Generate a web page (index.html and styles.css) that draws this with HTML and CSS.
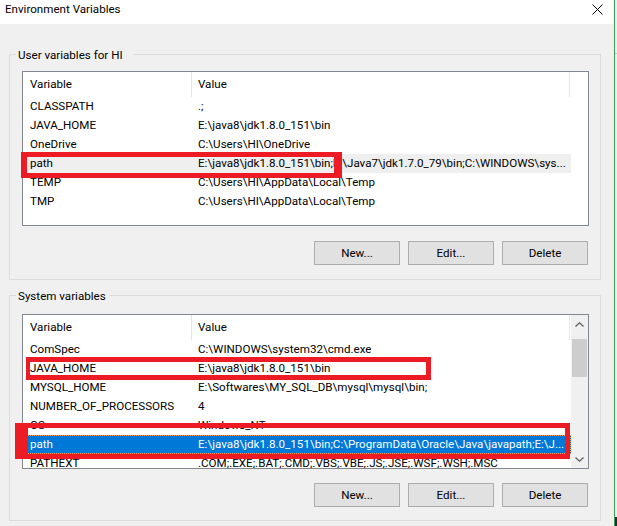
FILE: index.html
```html
<!DOCTYPE html>
<html>
<head>
<meta charset="utf-8">
<link rel="stylesheet" href="styles.css">
</head>
<body>
<div class="screen">
  <div class="window">
    <div class="titlebar">
      <span class="title">Environment Variables</span>
      <svg class="close" width="11" height="11" viewBox="0 0 11 11"><path d="M0.5 0.5 L10.5 10.5 M10.5 0.5 L0.5 10.5" stroke="#000" stroke-width="1" fill="none"/></svg>
    </div>
    <div class="content">
      <div class="group group-user">
        <div class="legend legend-user">User variables for HI</div>
        <div class="listbox listbox-user">
          <div class="list-main">
            <div class="header">
              <div class="hcell c1">Variable</div>
              <div class="hcell c2">Value</div>
            </div>
            <div class="row"><span class="c1">CLASSPATH</span><span class="c2">.;</span></div>
            <div class="row"><span class="c1">JAVA_HOME</span><span class="c2">E:\java8\jdk1.8.0_151\bin</span></div>
            <div class="row"><span class="c1">OneDrive</span><span class="c2">C:\Users\HI\OneDrive</span></div>
            <div class="row row-inactive"><span class="c1">path</span><span class="c2">E:\java8\jdk1.8.0_151\bin;E:\Java7\jdk1.7.0_79\bin;C:\WINDOWS\sys...</span></div>
            <div class="row"><span class="c1">TEMP</span><span class="c2">C:\Users\HI\AppData\Local\Temp</span></div>
            <div class="row"><span class="c1">TMP</span><span class="c2">C:\Users\HI\AppData\Local\Temp</span></div>
          </div>
          <div class="vscroll-blank"></div>
          <div class="mark mark-user-path"></div>
        </div>
        <div class="buttons">
          <div class="btn">New...</div>
          <div class="btn">Edit...</div>
          <div class="btn">Delete</div>
        </div>
      </div>

      <div class="group group-system">
        <div class="legend legend-system">System variables</div>
        <div class="listbox listbox-system">
          <div class="list-main">
            <div class="header">
              <div class="hcell c1">Variable</div>
              <div class="hcell c2">Value</div>
            </div>
            <div class="row"><span class="c1">ComSpec</span><span class="c2">C:\WINDOWS\system32\cmd.exe</span></div>
            <div class="row"><span class="c1">JAVA_HOME</span><span class="c2">E:\java8\jdk1.8.0_151\bin</span></div>
            <div class="row"><span class="c1">MYSQL_HOME</span><span class="c2">E:\Softwares\MY_SQL_DB\mysql\mysql\bin;</span></div>
            <div class="row"><span class="c1">NUMBER_OF_PROCESSORS</span><span class="c2">4</span></div>
            <div class="row"><span class="c1">OS</span><span class="c2">Windows_NT</span></div>
            <div class="row row-selected"><span class="c1">path</span><span class="c2">E:\java8\jdk1.8.0_151\bin;C:\ProgramData\Oracle\Java\javapath;E:\J...</span></div>
            <div class="row"><span class="c1">PATHEXT</span><span class="c2">.COM;.EXE;.BAT;.CMD;.VBS;.VBE;.JS;.JSE;.WSF;.WSH;.MSC</span></div>
          </div>
          <div class="vscroll">
            <svg class="arrow" width="9" height="5" viewBox="0 0 9 5"><path d="M0.5 4.5 L4.5 0.8 L8.5 4.5" stroke="#606060" stroke-width="1.3" fill="none"/></svg>
            <div class="thumb"></div>
            <div class="track-space"></div>
            <svg class="arrow" width="9" height="5" viewBox="0 0 9 5"><path d="M0.5 0.5 L4.5 4.2 L8.5 0.5" stroke="#606060" stroke-width="1.3" fill="none"/></svg>
          </div>
          <div class="mark mark-sys-java"></div>
          <div class="mark mark-sys-path"></div>
        </div>
        <div class="buttons buttons-system">
          <div class="btn">New...</div>
          <div class="btn">Edit...</div>
          <div class="btn">Delete</div>
        </div>
      </div>
    </div>
  </div>
  <div class="edge"></div>
</div>
</body>
</html>
```

FILE: styles.css
```css
html, body {
  margin: 0;
  padding: 0;
}

body {
  width: 617px;
  height: 526px;
  overflow: hidden;
  background: #f0f0f0;
  font-family: Roboto, "Liberation Sans", sans-serif;
  font-size: 11.6px;
  color: #000;
}

.screen {
  display: flex;
  width: 617px;
  height: 526px;
}

.window {
  width: 614px;
  height: 526px;
  display: flex;
  flex-direction: column;
  background: #f0f0f0;
}

.edge {
  width: 2px;
  height: 526px;
  border-left: 1px solid #3f9a5e;
  background:
    linear-gradient(#c8c8c8, #c8c8c8) 0 53px / 100% 1px no-repeat,
    linear-gradient(#2a2a2a, #2a2a2a) 0 517px / 100% 9px no-repeat,
    #f0f0f0;
}

.titlebar {
  height: 24px;
  background: #fff;
  display: flex;
  align-items: flex-start;
}

.title {
  padding-left: 5px;
  line-height: 18px;
}

.close {
  margin-left: auto;
  margin-right: 11px;
  margin-top: 4px;
}

.content {
  padding-top: 30px;
  padding-left: 9px;
}

.group {
  width: 592px;
  box-sizing: border-box;
  border: 1px solid #dcdcdc;
  padding: 0 11px 14px 12px;
}

.group-system {
  margin-top: 15px;
  padding-bottom: 13px;
}

.legend {
  margin-top: -8px;
  margin-left: -6px;
  height: 16px;
  line-height: 16px;
  background: #f0f0f0;
  width: fit-content;
  padding: 0 3px 0 2px;
}

.legend-user {
  padding-right: 11px;
}

.listbox {
  position: relative;
  display: flex;
  width: 567px;
  height: 155px;
  box-sizing: border-box;
  border: 1px solid #828790;
  background: #fff;
}

.listbox-user {
  margin-top: 8px;
}

.listbox-system {
  margin-top: 10px;
}

.list-main {
  width: 548px;
  overflow: hidden;
}

.header {
  display: flex;
  height: 25px;
}

.hcell {
  line-height: 25px;
  box-sizing: border-box;
  border-right: 1px solid #e5e5e5;
  white-space: nowrap;
}

.hcell.c1 {
  width: 169px;
  padding-left: 7px;
}

.hcell.c2 {
  width: 378px;
  padding-left: 6px;
}

.row {
  display: flex;
  height: 19px;
  line-height: 19px;
  white-space: nowrap;
  box-sizing: border-box;
}

.row .c1 {
  width: 169px;
  flex: none;
  padding-left: 7px;
  box-sizing: border-box;
}

.row .c2 {
  padding-left: 6px;
  overflow: hidden;
}

.row-inactive {
  background: #efefef;
}

.row-selected {
  background: #0078d7;
  color: #fff;
  border: 1px dotted #f0a060;
  line-height: 17px;
}

.row-selected .c1 {
  padding-left: 6px;
}

.row-selected .c2 {
  padding-left: 5px;
}

.vscroll-blank {
  width: 17px;
}

.vscroll {
  width: 17px;
  background: #f0f0f0;
  display: flex;
  flex-direction: column;
  align-items: center;
}

.vscroll .arrow {
  flex: none;
  margin: 7px 0 0;
}

.vscroll .arrow:last-child {
  margin: 0 0 6px;
}

.thumb {
  width: 15px;
  height: 38px;
  margin-top: 12px;
  background: #cdcdcd;
  flex: none;
}

.track-space {
  flex: 1;
}

.buttons {
  display: flex;
  justify-content: flex-end;
  gap: 8px;
  margin-top: 15px;
  margin-right: 1px;
}

.buttons-system {
  margin-top: 14px;
}

.btn {
  width: 86px;
  height: 24px;
  box-sizing: border-box;
  border: 1px solid #adadad;
  background: #e1e1e1;
  text-align: center;
  line-height: 22px;
}

.mark {
  position: absolute;
  box-sizing: border-box;
  border-style: solid;
  border-color: #ed1c24;
}

.mark-user-path {
  left: -2px;
  top: 80px;
  width: 321px;
  height: 26px;
  border-width: 5px 8px 5px 6px;
}

.mark-sys-java {
  left: 3px;
  top: 42px;
  width: 405px;
  height: 23px;
  border-width: 5px 5px 5px 4px;
}

.mark-sys-path {
  left: -8px;
  top: 108px;
  width: 555px;
  height: 36px;
  border-width: 5px 5px 5px 13px;
}
```
